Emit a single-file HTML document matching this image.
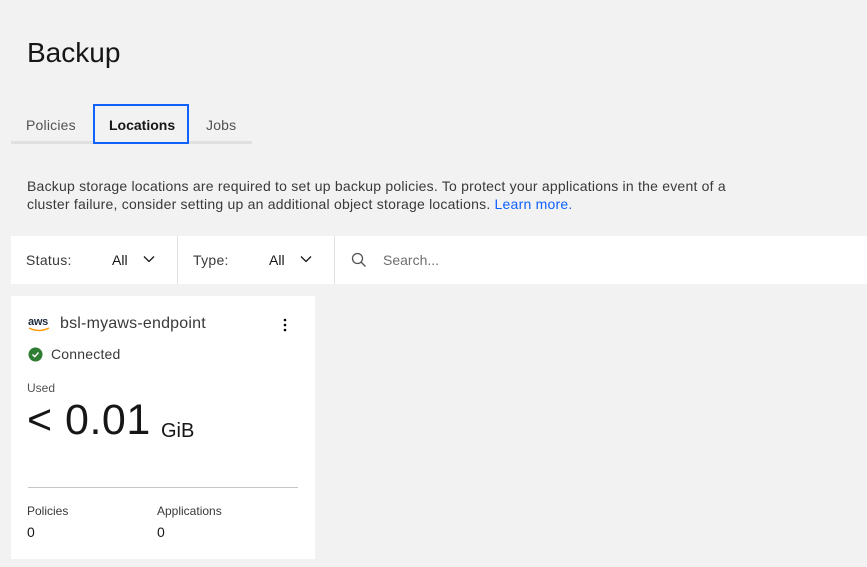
<!DOCTYPE html>
<html><head><style>
*{box-sizing:border-box;margin:0;padding:0}
body{width:867px;height:567px;background:#f2f2f2;font-family:"Liberation Sans",sans-serif;color:#161616;position:relative;overflow:hidden}
.a{position:absolute;white-space:nowrap}
</style></head><body>
<div class="a" style="left:27px;top:37px;font-size:28px;font-weight:300">Backup</div>
<div class="a" style="left:11px;top:141px;width:241px;height:3px;background:#e0e0e0"></div>
<div class="a" style="left:26px;top:117px;font-size:14px;color:#525252;letter-spacing:0.2px">Policies</div>
<div class="a" style="left:93px;top:104px;width:96px;height:40px;border:2px solid #0f62fe;background:#f2f2f2"></div>
<div class="a" style="left:109px;top:117px;font-size:14px;font-weight:bold">Locations</div>
<div class="a" style="left:206px;top:117px;font-size:14px;color:#525252;letter-spacing:0.2px">Jobs</div>
<div class="a" style="left:27px;top:177px;font-size:14px;line-height:18px;color:#393939;letter-spacing:0.22px">Backup storage locations are required to set up backup policies. To protect your applications in the event of a<br>cluster failure, consider setting up an additional object storage locations. <span style="color:#0f62fe">Learn more.</span></div>
<div class="a" style="left:11px;top:236px;width:856px;height:48px;background:#fff"></div>
<div class="a" style="left:177px;top:236px;width:1px;height:48px;background:#e0e0e0"></div>
<div class="a" style="left:334px;top:236px;width:1px;height:48px;background:#e0e0e0"></div>
<div class="a" style="left:26px;top:252px;font-size:14px;color:#393939;letter-spacing:0.3px">Status:</div>
<div class="a" style="left:112px;top:252px;font-size:14px">All</div>
<svg class="a" style="left:143px;top:255px" width="12" height="8"><path d="M1 1.5 6 6.5 11 1.5" fill="none" stroke="#161616" stroke-width="1.3"/></svg>
<div class="a" style="left:193px;top:252px;font-size:14px;color:#393939;letter-spacing:0.3px">Type:</div>
<div class="a" style="left:269px;top:252px;font-size:14px">All</div>
<svg class="a" style="left:300px;top:255px" width="12" height="8"><path d="M1 1.5 6 6.5 11 1.5" fill="none" stroke="#161616" stroke-width="1.3"/></svg>
<svg class="a" style="left:351px;top:252px" width="16" height="16"><circle cx="6.5" cy="6.5" r="5" fill="none" stroke="#525252" stroke-width="1.3"/><path d="M10 10 14.5 14.5" stroke="#525252" stroke-width="1.3"/></svg>
<div class="a" style="left:383px;top:252px;font-size:14px;color:#6f6f6f">Search...</div>
<div class="a" style="left:11px;top:296px;width:304px;height:263px;background:#fff"></div>
<div class="a" style="left:28px;top:316px;font-size:11px;font-weight:bold;color:#232f3e;letter-spacing:-0.3px">aws</div>
<svg class="a" style="left:28px;top:327px" width="24" height="6"><path d="M1 1Q11 6 21 1" fill="none" stroke="#ff9900" stroke-width="1.5"/></svg>
<div class="a" style="left:60px;top:315px;font-size:16px;color:#393939;letter-spacing:0.2px">bsl-myaws-endpoint</div>
<svg class="a" style="left:283px;top:318px" width="4" height="14"><circle cx="2" cy="2" r="1.3"/><circle cx="2" cy="7" r="1.3"/><circle cx="2" cy="12" r="1.3"/></svg>
<svg class="a" style="left:28px;top:347px" width="15" height="15"><circle cx="7.5" cy="7.5" r="7" fill="#2e7d32"/><path d="M4.5 7.5 6.7 9.7 10.5 5.5" fill="none" stroke="#fff" stroke-width="1.5"/></svg>
<div class="a" style="left:51px;top:346px;font-size:14px;color:#393939;letter-spacing:0.2px">Connected</div>
<div class="a" style="left:27px;top:381px;font-size:12px;color:#525252">Used</div>
<div class="a" style="left:27px;top:396px;font-size:43px;font-weight:300;color:#161616;letter-spacing:0.5px">&lt; 0.01</div>
<div class="a" style="left:161px;top:420px;font-size:20px;color:#161616">GiB</div>
<div class="a" style="left:28px;top:487px;width:270px;height:1px;background:#c6c6c6"></div>
<div class="a" style="left:27px;top:504px;font-size:12px;color:#393939">Policies</div>
<div class="a" style="left:27px;top:524px;font-size:14px">0</div>
<div class="a" style="left:157px;top:504px;font-size:12px;color:#393939">Applications</div>
<div class="a" style="left:157px;top:524px;font-size:14px">0</div>
</body></html>
